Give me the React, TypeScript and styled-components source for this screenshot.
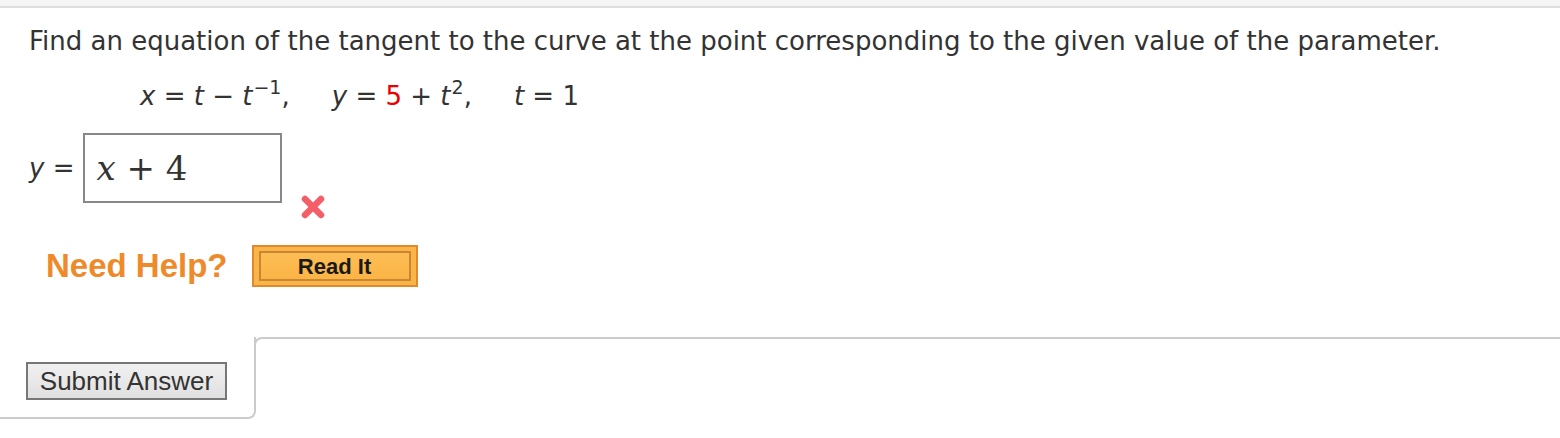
import React from 'react';
import styled, { createGlobalStyle } from 'styled-components';

const GlobalStyle = createGlobalStyle`
  body {
    margin: 0;
    background: #fff;
    font-family: "DejaVu Sans", Verdana, sans-serif;
    color: #333;
  }
`;

const Page = styled.div`
  width: 1560px;
  height: 438px;
  overflow: hidden;
  display: flex;
  flex-direction: column;
  & > * {
    flex-shrink: 0;
  }
`;

const TopStrip = styled.div`
  height: 6px;
  background: #f5f5f5;
  border-bottom: 2px solid #dedede;
`;

const Question = styled.div`
  padding: 18px 0 0 29px;
`;

const Prompt = styled.p`
  margin: 0;
  font-size: 26px;
  line-height: 30px;
  color: #333;
`;

const Equation = styled.div`
  margin: 25px 0 0 111px;
  font-size: 26px;
  line-height: 30px;
  display: flex;
  gap: 42px;
  color: #333;
`;

const Term = styled.span`
  white-space: nowrap;
`;

const V = styled.i`
  font-style: italic;
`;

const Red = styled.span`
  color: #e00;
`;

const Sup = styled.sup`
  font-size: 19px;
  line-height: 0;
  vertical-align: 11px;
  margin-left: 1px;
`;

const AnswerRow = styled.div`
  display: flex;
  align-items: flex-start;
  margin-top: 22px;
`;

const Label = styled.div`
  font-size: 26px;
  line-height: 70px;
  margin-right: 9px;
`;

const AnswerBox = styled.div`
  width: 195px;
  height: 66px;
  border: 2px solid #888;
  box-sizing: content-box;
  font-family: "DejaVu Serif", "Liberation Serif", serif;
  font-size: 34px;
  line-height: 66px;
  color: #333;
  text-indent: 11px;
`;

const MathX = styled.i`
  font-style: italic;
`;

const Mark = styled.div`
  margin: 60px 0 0 17px;
  width: 28px;
  height: 28px;
  filter: blur(0.6px);
`;

const HelpRow = styled.div`
  display: flex;
  align-items: center;
  margin: 24px 0 0 17px;
  gap: 24px;
`;

const HelpText = styled.span`
  font-family: "Liberation Sans", Arial, sans-serif;
  font-weight: bold;
  font-size: 33px;
  color: #ee8a2a;
`;

const ReadIt = styled.button`
  width: 166px;
  height: 42px;
  border: 2px solid #e08a2e;
  background: #fbb447;
  padding: 4px 5px;
  box-sizing: border-box;
  cursor: pointer;
  display: block;
`;

const ReadItInner = styled.span`
  display: block;
  height: 100%;
  border: 2px solid #c98633;
  box-sizing: border-box;
  font-family: "Liberation Sans", Arial, sans-serif;
  font-weight: bold;
  font-size: 22px;
  line-height: 27px;
  color: #1a1a1a;
  background: linear-gradient(#fdbe55, #fbb446);
`;

const Footer = styled.div`
  display: flex;
  align-items: flex-start;
  margin-top: 50px;
`;

const SubmitCell = styled.div`
  width: 256px;
  height: 82px;
  padding: 25px 0 0 26px;
  box-sizing: border-box;
  border-right: 2px solid #cbcbcb;
  border-bottom: 2px solid #cbcbcb;
  border-bottom-right-radius: 8px;
`;

const RestCell = styled.div`
  flex: 1;
  height: 60px;
  margin-left: -2px;
  border-top: 2px solid #cbcbcb;
  border-left: 2px solid #cbcbcb;
  border-top-left-radius: 8px;
`;

const SubmitButton = styled.button`
  width: 201px;
  height: 38px;
  border: 2px solid #777;
  background: linear-gradient(#f0f0f0, #e0e0e0);
  font-family: "Liberation Sans", Arial, sans-serif;
  font-size: 26px;
  line-height: 32px;
  color: #333;
  padding: 0;
  cursor: pointer;
`;

const Cross = () => (
  <svg width="28" height="28" viewBox="0 0 28 28">
    <g stroke="#f2424f" strokeWidth="6.5" strokeLinecap="round" opacity="0.85">
      <line x1="6" y1="6" x2="22" y2="22" />
      <line x1="22" y1="6" x2="6" y2="22" />
    </g>
  </svg>
);

export default function App() {
  return (
    <Page>
      <GlobalStyle />
      <TopStrip />
      <Question>
        <Prompt>Find an equation of the tangent to the curve at the point corresponding to the given value of the parameter.</Prompt>
        <Equation>
          <Term>
            <V>x</V> = <V>t</V> − <V>t</V><Sup>−1</Sup>,
          </Term>
          <Term>
            <V>y</V> = <Red>5</Red> + <V>t</V><Sup>2</Sup>,
          </Term>
          <Term>
            <V>t</V> = 1
          </Term>
        </Equation>
        <AnswerRow>
          <Label>
            <V>y</V> =
          </Label>
          <AnswerBox>
            <MathX>x</MathX> + 4
          </AnswerBox>
          <Mark>
            <Cross />
          </Mark>
        </AnswerRow>
        <HelpRow>
          <HelpText>Need Help?</HelpText>
          <ReadIt>
            <ReadItInner>Read It</ReadItInner>
          </ReadIt>
        </HelpRow>
      </Question>
      <Footer>
        <SubmitCell>
          <SubmitButton>Submit Answer</SubmitButton>
        </SubmitCell>
        <RestCell />
      </Footer>
    </Page>
  );
}
